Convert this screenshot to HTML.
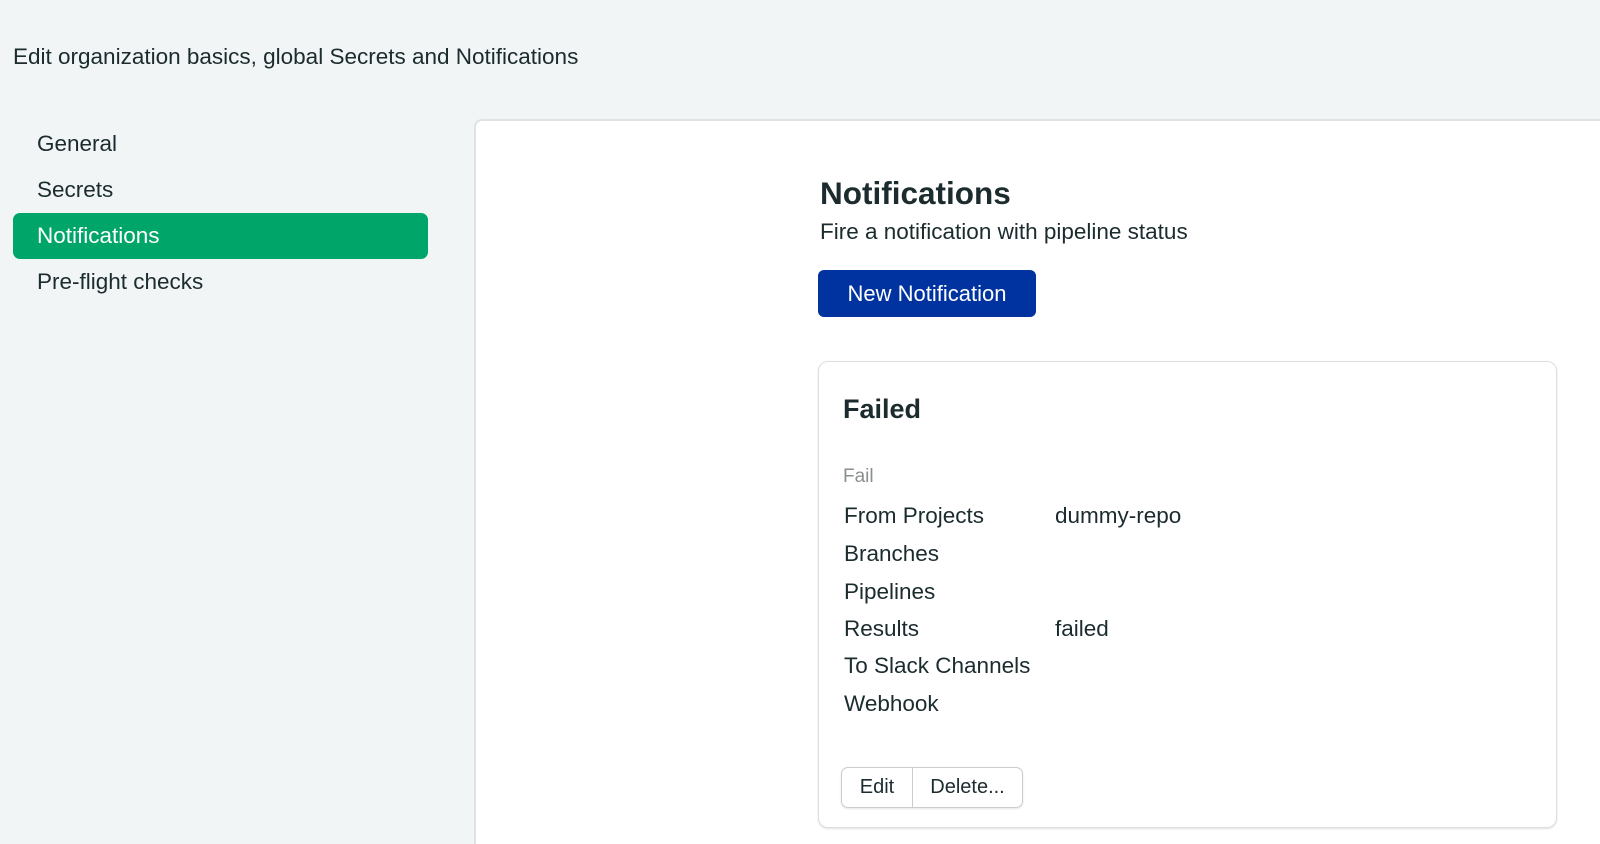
<!DOCTYPE html>
<html style="overflow:hidden"><head><style>
html,body{margin:0;width:1600px;height:844px;overflow:hidden}
body{background:#f1f5f5;font-family:"Liberation Sans",sans-serif;color:#1b2b2e;position:relative}
.t{position:absolute;white-space:nowrap;line-height:26px}
.panel{position:absolute;left:474px;top:119px;width:1140px;height:740px;background:#fff;border-left:2px solid #dfe3e3;border-top:2px solid #dfe3e3;border-radius:8px 0 0 0}
.nav{position:absolute;left:37px;font-size:22.5px}
.card{position:absolute;left:818px;top:361px;width:739px;height:467px;border:1.5px solid #dcdfe0;border-radius:10px;box-shadow:0 1px 2px rgba(0,0,0,.12);background:#fff;box-sizing:border-box}
.row{position:absolute;left:844px;font-size:22.5px}
.val{position:absolute;left:1055px;font-size:22.5px}
</style></head><body>
<div class="t" style="left:13px;top:44px;font-size:22.5px">Edit organization basics, global Secrets and Notifications</div>
<div class="nav t" style="top:131px">General</div>
<div class="nav t" style="top:177px">Secrets</div>
<div style="position:absolute;left:13px;top:213px;width:415px;height:46px;background:#00a569;border-radius:7px"></div>
<div class="nav t" style="top:223px;color:#fff">Notifications</div>
<div class="nav t" style="top:269px">Pre-flight checks</div>
<div class="panel"></div>
<div class="t" style="left:820px;top:176px;font-size:31.5px;font-weight:bold;line-height:34px">Notifications</div>
<div class="t" style="left:820px;top:219px;font-size:22.5px">Fire a notification with pipeline status</div>
<div style="position:absolute;left:818px;top:270px;width:218px;height:47px;background:#0033a0;border-radius:6px;color:#fff;font-size:22px;line-height:47px;text-align:center">New Notification</div>
<div class="card"></div>
<div class="t" style="left:843px;top:394px;font-size:27px;font-weight:bold;line-height:30px">Failed</div>
<div class="t" style="left:843px;top:464px;font-size:19px;color:#8a8f90">Fail</div>
<div class="row t" style="top:503px">From Projects</div><div class="val t" style="top:503px">dummy-repo</div>
<div class="row t" style="top:541px">Branches</div>
<div class="row t" style="top:579px">Pipelines</div>
<div class="row t" style="top:616px">Results</div><div class="val t" style="top:616px">failed</div>
<div class="row t" style="top:653px">To Slack Channels</div>
<div class="row t" style="top:691px">Webhook</div>
<div style="position:absolute;left:841px;top:767px;width:180px;height:39px;border:1px solid #c9cdce;border-radius:7px;box-shadow:0 1px 2px rgba(0,0,0,.1);font-size:20px;line-height:39px;display:flex">
<div style="width:70px;text-align:center;border-right:1px solid #c9cdce">Edit</div><div style="flex:1;text-align:center">Delete...</div></div>
</body></html>
